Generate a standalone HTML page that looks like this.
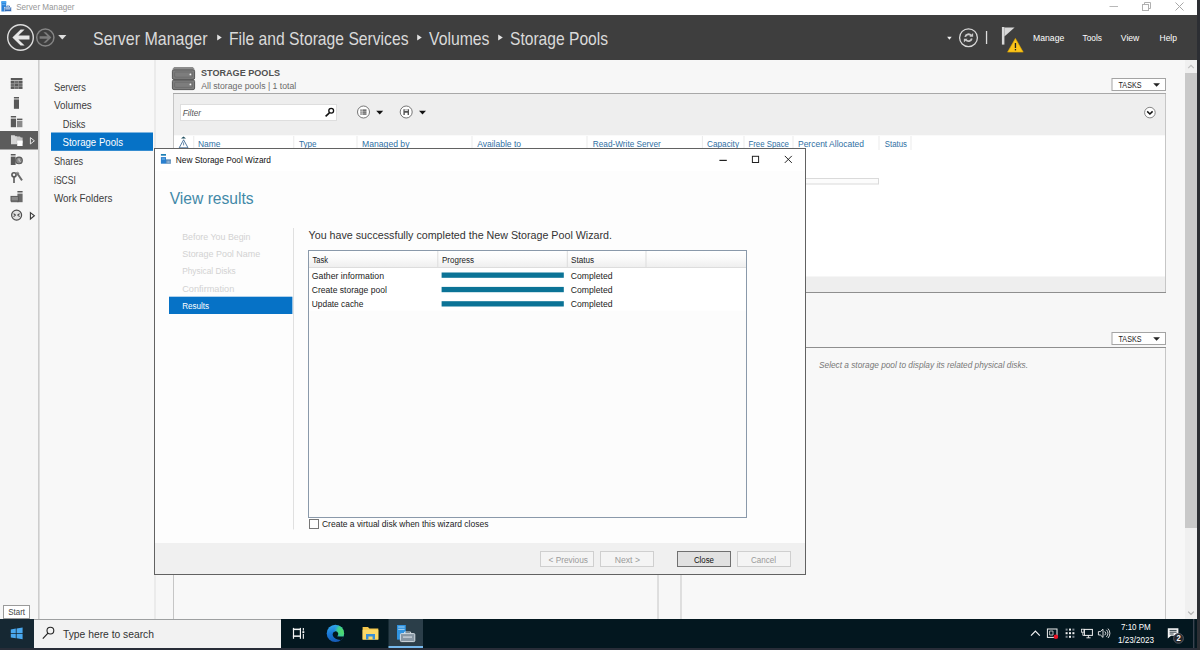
<!DOCTYPE html>
<html><head><meta charset="utf-8"><title>Server Manager</title>
<style>
*{margin:0;padding:0}
html,body{width:1200px;height:650px;overflow:hidden;background:#2c2e33}
svg{display:block;font-family:"Liberation Sans",sans-serif}
text{white-space:pre}
</style></head><body>
<svg width="1200" height="650" viewBox="0 0 1200 650">
<g id="server-manager">
<rect x="0" y="0" width="1200" height="650" fill="#2c2e33" />
<rect x="0" y="0" width="1197" height="15" fill="#ffffff" />
<text x="16.2" y="9.8" font-size="8.3" fill="#969696" textLength="58.2" lengthAdjust="spacingAndGlyphs" >Server Manager</text>
<rect x="0" y="15" width="1197" height="45" fill="#3e3e3e" />
<rect x="0" y="60" width="1197" height="560" fill="#f7f7f7" />
<rect x="0" y="60" width="38" height="560" fill="#f6f6f6" />
<rect x="38" y="60" width="1" height="560" fill="#cdcdcd" />
<rect x="39" y="60" width="1" height="560" fill="#dedede" />
<rect x="0" y="131" width="38" height="18.5" fill="#5c5c5c" />
<rect x="40" y="60" width="115" height="560" fill="#f8f8f8" />
<rect x="154" y="60" width="2" height="560" fill="#ebebeb" />
<rect x="51" y="132.5" width="102" height="18.3" fill="#0672c6" />
<text x="54" y="90.60000000000001" font-size="10.6" fill="#3c3c3c" textLength="31.8" lengthAdjust="spacingAndGlyphs" >Servers</text>
<text x="54" y="109.2" font-size="10.6" fill="#3c3c3c" textLength="37.8" lengthAdjust="spacingAndGlyphs" >Volumes</text>
<text x="62.7" y="127.80000000000001" font-size="10.6" fill="#3c3c3c" textLength="22.8" lengthAdjust="spacingAndGlyphs" >Disks</text>
<text x="62.5" y="146.4" font-size="10.6" fill="#fff" textLength="60.5" lengthAdjust="spacingAndGlyphs" >Storage Pools</text>
<text x="54" y="165.0" font-size="10.6" fill="#3c3c3c" textLength="29.1" lengthAdjust="spacingAndGlyphs" >Shares</text>
<text x="54" y="183.6" font-size="10.6" fill="#3c3c3c" textLength="21.8" lengthAdjust="spacingAndGlyphs" >iSCSI</text>
<text x="54" y="202.20000000000002" font-size="10.6" fill="#3c3c3c" textLength="58.4" lengthAdjust="spacingAndGlyphs" >Work Folders</text>
<text x="93" y="45" font-size="17.8" fill="#dadada" textLength="114.5" lengthAdjust="spacingAndGlyphs" >Server Manager</text>
<text x="229" y="45" font-size="17.8" fill="#dadada" textLength="179.5" lengthAdjust="spacingAndGlyphs" >File and Storage Services</text>
<text x="429" y="45" font-size="17.8" fill="#dadada" textLength="60.5" lengthAdjust="spacingAndGlyphs" >Volumes</text>
<text x="510" y="45" font-size="17.8" fill="#dadada" textLength="98" lengthAdjust="spacingAndGlyphs" >Storage Pools</text>
<path d="M217.2 34.6 l4.6 2.9 l-4.6 2.9z" fill="#e4e4e4"/>
<path d="M417.2 34.6 l4.6 2.9 l-4.6 2.9z" fill="#e4e4e4"/>
<path d="M498.2 34.6 l4.6 2.9 l-4.6 2.9z" fill="#e4e4e4"/>
<text x="1033" y="41.3" font-size="8.6" fill="#ffffff" textLength="31.3" lengthAdjust="spacingAndGlyphs" >Manage</text>
<text x="1082.6" y="41.3" font-size="8.6" fill="#ffffff" textLength="19.4" lengthAdjust="spacingAndGlyphs" >Tools</text>
<text x="1120.8" y="41.3" font-size="8.6" fill="#ffffff" textLength="18.5" lengthAdjust="spacingAndGlyphs" >View</text>
<text x="1159.5" y="41.3" font-size="8.6" fill="#ffffff" textLength="17.5" lengthAdjust="spacingAndGlyphs" >Help</text>
<text x="201" y="76" font-size="9.3" fill="#505050" textLength="79" lengthAdjust="spacingAndGlyphs" font-weight="bold">STORAGE POOLS</text>
<text x="201.2" y="88.5" font-size="8.3" fill="#6a6a6a" textLength="95.1" lengthAdjust="spacingAndGlyphs" >All storage pools | 1 total</text>
<rect x="173.5" y="93.5" width="992" height="199" fill="#ffffff" stroke="#c6c6c6" stroke-width="1" />
<line x1="173" y1="93.5" x2="1166" y2="93.5" stroke="#a8a8a8" stroke-width="1"/>
<line x1="173" y1="292.5" x2="1166" y2="292.5" stroke="#8f8f8f" stroke-width="1"/>
<rect x="174" y="94" width="991" height="41.3" fill="#eeeeee" />
<rect x="174" y="276.5" width="991" height="15.5" fill="#eeeeee" />
<rect x="180.5" y="104.5" width="156" height="16" fill="#ffffff" stroke="#dedede" stroke-width="1" />
<text x="182.8" y="115.8" font-size="8.6" fill="#555" textLength="18.2" lengthAdjust="spacingAndGlyphs" font-style="italic">Filter</text>
<text x="198" y="146.5" font-size="8.5" fill="#2f6fa3" textLength="22.5" lengthAdjust="spacingAndGlyphs" >Name</text>
<text x="299" y="146.5" font-size="8.5" fill="#2f6fa3" textLength="17.5" lengthAdjust="spacingAndGlyphs" >Type</text>
<text x="362" y="146.5" font-size="8.5" fill="#2f6fa3" textLength="47.5" lengthAdjust="spacingAndGlyphs" >Managed by</text>
<text x="477.2" y="146.5" font-size="8.5" fill="#2f6fa3" textLength="43.8" lengthAdjust="spacingAndGlyphs" >Available to</text>
<text x="592.8" y="146.5" font-size="8.5" fill="#2f6fa3" textLength="68.0" lengthAdjust="spacingAndGlyphs" >Read-Write Server</text>
<text x="707" y="146.5" font-size="8.5" fill="#2f6fa3" textLength="32" lengthAdjust="spacingAndGlyphs" >Capacity</text>
<text x="748.4" y="146.5" font-size="8.5" fill="#2f6fa3" textLength="40.6" lengthAdjust="spacingAndGlyphs" >Free Space</text>
<text x="798" y="146.5" font-size="8.5" fill="#2f6fa3" textLength="66" lengthAdjust="spacingAndGlyphs" >Percent Allocated</text>
<text x="884.8" y="146.5" font-size="8.5" fill="#2f6fa3" textLength="22.2" lengthAdjust="spacingAndGlyphs" >Status</text>
<line x1="193.75" y1="136" x2="193.75" y2="150" stroke="#ebebeb" stroke-width="1"/>
<line x1="293.75" y1="136" x2="293.75" y2="150" stroke="#ebebeb" stroke-width="1"/>
<line x1="357" y1="136" x2="357" y2="150" stroke="#ebebeb" stroke-width="1"/>
<line x1="472" y1="136" x2="472" y2="150" stroke="#ebebeb" stroke-width="1"/>
<line x1="587" y1="136" x2="587" y2="150" stroke="#ebebeb" stroke-width="1"/>
<line x1="702.4" y1="136" x2="702.4" y2="150" stroke="#ebebeb" stroke-width="1"/>
<line x1="744" y1="136" x2="744" y2="150" stroke="#ebebeb" stroke-width="1"/>
<line x1="793" y1="136" x2="793" y2="150" stroke="#ebebeb" stroke-width="1"/>
<line x1="879" y1="136" x2="879" y2="150" stroke="#ebebeb" stroke-width="1"/>
<line x1="911" y1="136" x2="911" y2="150" stroke="#ebebeb" stroke-width="1"/>
<rect x="805.5" y="178.5" width="73" height="5.5" fill="#fcfcfc" stroke="#dadada" stroke-width="1" />
<rect x="1112" y="78.5" width="53.5" height="12" fill="#ffffff" stroke="#a4a4a4" stroke-width="1" />
<text x="1118.5" y="87.8" font-size="8.4" fill="#222" textLength="23.0" lengthAdjust="spacingAndGlyphs" >TASKS</text>
<path d="M1153.2 83.2 h6.8 l-3.4 3.6z" fill="#222"/>
<rect x="1112" y="332.5" width="53.5" height="12" fill="#ffffff" stroke="#a4a4a4" stroke-width="1" />
<text x="1118.5" y="341.8" font-size="8.4" fill="#222" textLength="23.0" lengthAdjust="spacingAndGlyphs" >TASKS</text>
<path d="M1153.2 337.2 h6.8 l-3.4 3.6z" fill="#222"/>
<rect x="173.5" y="347.5" width="484.5" height="280" fill="#f8f8f8" stroke="#c6c6c6" stroke-width="1" />
<rect x="681" y="347.5" width="484.5" height="280" fill="#f8f8f8" stroke="#c6c6c6" stroke-width="1" />
<line x1="173" y1="347.5" x2="658.5" y2="347.5" stroke="#8f8f8f" stroke-width="1"/>
<line x1="680.5" y1="347.5" x2="1166" y2="347.5" stroke="#8f8f8f" stroke-width="1"/>
<text x="819" y="367.6" font-size="8.7" fill="#777" textLength="209" lengthAdjust="spacingAndGlyphs" font-style="italic">Select a storage pool to display its related physical disks.</text>
<rect x="1185" y="60" width="12" height="560" fill="#f0f0f0" />
<rect x="1185" y="73" width="12" height="455" fill="#c9c9c9" />
<g id="title-icon"><rect x="1.4" y="1.3" width="4.8" height="10.2" fill="#2a80d8"/><rect x="1.4" y="1.3" width="4.8" height="1.9" fill="#45a4f2"/><rect x="2.2" y="4.3" width="3.2" height="0.8" fill="#7cc0f6"/><rect x="4.3" y="7.2" width="7.1" height="4.2" fill="#3067b0" stroke="#f4f8fc" stroke-width="0.5"/><rect x="5.3" y="8.4" width="5.1" height="1" fill="#e4eefa"/><path d="M6.9 7v-1h2.6v1" fill="none" stroke="#3067b0" stroke-width="0.8"/></g>
<line x1="1109.5" y1="6.5" x2="1118" y2="6.5" stroke="#b8b8b8" stroke-width="1"/>
<rect x="1142.5" y="4.5" width="6" height="6" fill="#fff" stroke="#b0b0b0"/><path d="M1144.5 4.5v-2h6v6h-2" fill="none" stroke="#b0b0b0"/>
<path d="M1175.5 2.5l8 8M1183.5 2.5l-8 8" stroke="#a8a8a8" fill="none"/>
<circle cx="20.5" cy="37.5" r="12.8" fill="none" stroke="#dcdcdc" stroke-width="1.4"/>
<path d="M12.4 37.5 L20.6 29.6 L24.6 29.6 L18.4 35.6 L29.5 35.6 L29.5 39.4 L18.4 39.4 L24.6 45.4 L20.6 45.4Z" fill="#e6e6e6"/>
<circle cx="45.3" cy="37.5" r="8.6" fill="none" stroke="#858585" stroke-width="1.5"/>
<path d="M51.4 37.5 L46 32.2 L43.4 32.2 L47.5 36.3 L39.6 36.3 L39.6 38.7 L47.5 38.7 L43.4 42.8 L46 42.8Z" fill="#7c7c7c"/>
<path d="M58.2 35 h8.2 l-4.1 4.6z" fill="#dedede"/>
<path d="M947.1 36.8 h4.6 l-2.3 2.9z" fill="#f0f0f0"/>
<circle cx="968.5" cy="37.7" r="8.9" fill="none" stroke="#d8d8d8" stroke-width="1.3"/>
<path d="M965.2 36.9 A3.4 3.4 0 0 1 971.2 35.6" fill="none" stroke="#c8c8c8" stroke-width="1.8"/><path d="M969.4 36.7 h3.7 v-3.7z" fill="#c8c8c8"/>
<path d="M971.8 38.5 A3.4 3.4 0 0 1 965.8 39.8" fill="none" stroke="#c8c8c8" stroke-width="1.8"/><path d="M967.6 38.7 h-3.7 v3.7z" fill="#c8c8c8"/>
<rect x="985.9" y="31" width="1.3" height="13" fill="#dcdcdc" />
<path d="M1001.9 27 h2.5 v17.6 h-2.5z" fill="#d8d8d8"/><path d="M1004.4 27.4 L1014.6 27.6 L1004.4 36.4z" fill="#d8d8d8"/>
<path d="M1015.4 38.4 L1023.2 52.1 L1007.6 52.1Z" fill="#fcc419" stroke="#e0a800" stroke-width="0.6" stroke-linejoin="round"/><rect x="1014.8" y="43" width="1.3" height="5" fill="#222"/><rect x="1014.8" y="49" width="1.3" height="1.4" fill="#222"/>
<g id="ico-dashboard" fill="#595959"><rect x="10.8" y="80.6" width="11.6" height="8.4" fill="#a4a4a4"/><rect x="10.8" y="78" width="11.6" height="2.2"/><rect x="10.8" y="81.0" width="3.5" height="2.3" fill="#595959"/><rect x="10.8" y="83.8" width="3.5" height="2.3" fill="#6e6e6e"/><rect x="10.8" y="86.6" width="3.5" height="2.3" fill="#595959"/><rect x="14.850000000000001" y="81.0" width="3.5" height="2.3" fill="#6e6e6e"/><rect x="14.850000000000001" y="83.8" width="3.5" height="2.3" fill="#595959"/><rect x="14.850000000000001" y="86.6" width="3.5" height="2.3" fill="#6e6e6e"/><rect x="18.9" y="81.0" width="3.5" height="2.3" fill="#595959"/><rect x="18.9" y="83.8" width="3.5" height="2.3" fill="#6e6e6e"/><rect x="18.9" y="86.6" width="3.5" height="2.3" fill="#595959"/></g>
<g id="ico-local" fill="#595959"><rect x="13.9" y="97" width="5.1" height="1.5"/><rect x="13.9" y="99.4" width="5.1" height="9.4"/></g>
<g id="ico-all"><rect x="10.8" y="116" width="5.3" height="1.5" fill="#595959"/><rect x="10.8" y="118.6" width="5.3" height="8.6" fill="#595959"/><rect x="17" y="118.6" width="5.4" height="1.6" fill="#595959"/><rect x="17" y="121" width="5.4" height="6.2" fill="#8a8a8a"/></g>
<g id="ico-fss"><path d="M11 135.2 h3.6 l0.8 1 h1.6 v8 h-6z" fill="#d6d6d6"/><path d="M16.6 136.4 h3.4 l0.8 1 h1.8 v5.8 h-6z" fill="#c4c4c4"/><rect x="17.2" y="140.6" width="5.4" height="5.4" fill="#ffffff"/></g>
<path d="M30.4 137.6 L34.4 140.8 L30.4 144 Z" fill="none" stroke="#f0f0f0" stroke-width="0.9"/>
<g id="ico-5"><rect x="10.8" y="154" width="4.8" height="1.5" fill="#595959"/><rect x="10.8" y="156.6" width="4.8" height="8.4" fill="#595959"/><circle cx="19" cy="160.4" r="3.3" fill="#8a8a8a" stroke="#595959" stroke-width="1.1"/><path d="M19 158.4v2.2l1.6 1" stroke="#eee" stroke-width="0.7" fill="none"/></g>
<g id="ico-6" stroke="#595959" fill="none"><circle cx="14" cy="174.8" r="2.1" stroke-width="1.6"/><path d="M14 177v6" stroke-width="1.6"/><path d="M17.2 173.2 L22 180.4" stroke-width="1.9" stroke="#6a6a6a"/><circle cx="17.4" cy="173.6" r="1.3" stroke-width="1" stroke="#777"/></g>
<g id="ico-7"><rect x="17.4" y="191" width="5.2" height="1.5" fill="#595959"/><rect x="17.4" y="193.6" width="5.2" height="8.6" fill="#6a6a6a"/><rect x="11" y="196.4" width="7.4" height="4.6" fill="#8a8a8a" stroke="#595959" stroke-width="1"/><rect x="11" y="201.2" width="7.4" height="1" fill="#595959"/></g>
<g id="ico-8"><circle cx="16.6" cy="215.1" r="5" fill="#e2e2e2" stroke="#4e4e4e" stroke-width="1.2"/><path d="M13.6 213.6l1.8 1.5l-1.8 1.5M19.6 213.6l-1.8 1.5l1.8 1.5" stroke="#444" stroke-width="1.1" fill="none"/></g>
<path d="M30.4 212.6 L34.4 215.8 L30.4 219 Z" fill="none" stroke="#3a3a3a" stroke-width="1.1"/>
<g id="ico-storage"><path d="M174.2 67 h18.6 l2.2 2.6 h-23z" fill="#8c8c8c"/><rect x="172.4" y="69.8" width="22.2" height="9.6" rx="1.5" fill="#7d7d7d" stroke="#555" stroke-width="1"/><rect x="172.4" y="80" width="22.2" height="9.6" rx="1.5" fill="#7d7d7d" stroke="#555" stroke-width="1"/><rect x="174.6" y="72" width="17.8" height="5.2" rx="1" fill="none" stroke="#6a6a6a" stroke-width="0.8"/><rect x="174.6" y="82.2" width="17.8" height="5.2" rx="1" fill="none" stroke="#6a6a6a" stroke-width="0.8"/><circle cx="190.4" cy="74.4" r="0.9" fill="#f4f4f4"/><circle cx="190.4" cy="84.4" r="0.9" fill="#f4f4f4"/></g>
<g id="ico-search"><circle cx="331.2" cy="110.8" r="2.4" fill="none" stroke="#111" stroke-width="1.3"/><path d="M329.4 112.8 L325.6 116.4" stroke="#111" stroke-width="1.6"/></g>
<g id="ico-list"><circle cx="363.5" cy="112" r="6" fill="#fff" stroke="#666" stroke-width="0.9"/><rect x="360.4" y="109.5" width="1.3" height="1.25" fill="#444"/><rect x="362.4" y="109.5" width="4.1" height="1.25" fill="#444"/><rect x="360.4" y="111.45" width="1.3" height="1.25" fill="#444"/><rect x="362.4" y="111.45" width="4.1" height="1.25" fill="#444"/><rect x="360.4" y="113.4" width="1.3" height="1.25" fill="#444"/><rect x="362.4" y="113.4" width="4.1" height="1.25" fill="#444"/></g>
<path d="M376.2 110.8 h7 l-3.5 3.7z" fill="#111"/>
<g id="ico-save"><circle cx="406.2" cy="112" r="6" fill="#fff" stroke="#666" stroke-width="0.9"/><path d="M403.4 109.2 h5.6 v5.8 h-1.4 v-2.2 h-2.8 v2.2 h-1.4z" fill="#555"/><rect x="404.6" y="109.2" width="3.2" height="1.8" fill="#ddd"/></g>
<path d="M419 110.8 h7 l-3.5 3.7z" fill="#111"/>
<g id="ico-expand"><circle cx="1149.9" cy="112.6" r="5.3" fill="#fff" stroke="#777" stroke-width="0.9"/><path d="M1147.2 111.4 l2.7 2.6 l2.7 -2.6" fill="none" stroke="#111" stroke-width="1.5"/></g>
<path d="M181 138.6 h5 l-2.5 -2.2z" fill="#1f4e5f"/>
<path d="M183.6 139.8 L188 147.8 L179.2 147.8Z" fill="none" stroke="#2b5a8a" stroke-width="0.8"/><path d="M183.6 142.4v3" stroke="#2b5a8a" stroke-width="0.7"/>
<path d="M1188.2 68.2 l2.8 -2.8 l2.8 2.8" fill="none" stroke="#c0c0c0" stroke-width="1.2"/>
<path d="M1188.2 611.6 l2.8 2.8 l2.8 -2.8" fill="none" stroke="#b0b0b0" stroke-width="1.2"/>
</g>
<g id="wizard">
<rect x="154.5" y="148.5" width="651" height="426" fill="#fdfdfd" stroke="#626262" stroke-width="1" />
<rect x="155" y="149" width="650" height="22" fill="#ffffff" />
<rect x="155" y="543" width="650" height="31" fill="#f0f0f0" />
<text x="175.8" y="162.8" font-size="8.9" fill="#111" textLength="95.2" lengthAdjust="spacingAndGlyphs" >New Storage Pool Wizard</text>
<text x="169.7" y="204.3" font-size="15.8" fill="#4289a8" textLength="84.0" lengthAdjust="spacingAndGlyphs" >View results</text>
<text x="182.2" y="239.9" font-size="9.2" fill="#d2d2d2" textLength="68.3" lengthAdjust="spacingAndGlyphs" >Before You Begin</text>
<text x="182.2" y="257.1" font-size="9.2" fill="#d2d2d2" textLength="78.0" lengthAdjust="spacingAndGlyphs" >Storage Pool Name</text>
<text x="182.2" y="274.3" font-size="9.2" fill="#d2d2d2" textLength="53.6" lengthAdjust="spacingAndGlyphs" >Physical Disks</text>
<text x="182.2" y="291.6" font-size="9.2" fill="#d2d2d2" textLength="52.1" lengthAdjust="spacingAndGlyphs" >Confirmation</text>
<rect x="169" y="296.7" width="123.4" height="17.3" fill="#0672c6" />
<text x="182.2" y="308.8" font-size="9.2" fill="#ffffff" textLength="26.9" lengthAdjust="spacingAndGlyphs" >Results</text>
<line x1="293.5" y1="228" x2="293.5" y2="529.5" stroke="#e0e0e0" stroke-width="1"/>
<text x="308.6" y="238.8" font-size="10.5" fill="#333" textLength="303.4" lengthAdjust="spacingAndGlyphs" >You have successfully completed the New Storage Pool Wizard.</text>
<rect x="308.5" y="250.5" width="438" height="267" fill="#fcfcfc" stroke="#8a99aa" stroke-width="1" />
<defs><linearGradient id="thg" x1="0" y1="0" x2="0" y2="1"><stop offset="0" stop-color="#ffffff"/><stop offset="0.45" stop-color="#fafafa"/><stop offset="1" stop-color="#eeeeee"/></linearGradient></defs>
<rect x="309" y="251" width="437" height="16.5" fill="url(#thg)" />
<rect x="309" y="268" width="437" height="42.5" fill="#ffffff" />
<line x1="309" y1="267.5" x2="746" y2="267.5" stroke="#dddddd" stroke-width="1"/>
<line x1="437.8" y1="251" x2="437.8" y2="267" stroke="#dddddd" stroke-width="1"/>
<line x1="567.3" y1="251" x2="567.3" y2="267" stroke="#dddddd" stroke-width="1"/>
<line x1="646" y1="251" x2="646" y2="267" stroke="#dddddd" stroke-width="1"/>
<text x="312.5" y="262.6" font-size="8.9" fill="#222" textLength="15.5" lengthAdjust="spacingAndGlyphs" >Task</text>
<text x="442" y="262.6" font-size="8.9" fill="#222" textLength="32" lengthAdjust="spacingAndGlyphs" >Progress</text>
<text x="571" y="262.6" font-size="8.9" fill="#222" textLength="23" lengthAdjust="spacingAndGlyphs" >Status</text>
<text x="311.8" y="278.7" font-size="8.9" fill="#222" textLength="72.2" lengthAdjust="spacingAndGlyphs" >Gather information</text>
<rect x="441.6" y="272.5" width="122.2" height="5.3" fill="#0b7396" />
<text x="570.8" y="278.7" font-size="8.9" fill="#222" textLength="41.7" lengthAdjust="spacingAndGlyphs" >Completed</text>
<text x="311.8" y="293.1" font-size="8.9" fill="#222" textLength="75.1" lengthAdjust="spacingAndGlyphs" >Create storage pool</text>
<rect x="441.6" y="286.9" width="122.2" height="5.3" fill="#0b7396" />
<text x="570.8" y="293.1" font-size="8.9" fill="#222" textLength="41.7" lengthAdjust="spacingAndGlyphs" >Completed</text>
<text x="311.8" y="307.4" font-size="8.9" fill="#222" textLength="51.6" lengthAdjust="spacingAndGlyphs" >Update cache</text>
<rect x="441.6" y="301.2" width="122.2" height="5.3" fill="#0b7396" />
<text x="570.8" y="307.4" font-size="8.9" fill="#222" textLength="41.7" lengthAdjust="spacingAndGlyphs" >Completed</text>
<rect x="309.5" y="519.5" width="9" height="9" fill="#ffffff" stroke="#777" stroke-width="1" />
<text x="322" y="527" font-size="8.7" fill="#222" textLength="166.4" lengthAdjust="spacingAndGlyphs" >Create a virtual disk when this wizard closes</text>
<rect x="540.5" y="551.5" width="53" height="15" fill="#f4f4f4" stroke="#cfcfcf" stroke-width="1" />
<text x="548.5" y="562.5" font-size="8.9" fill="#9a9a9a" textLength="39.5" lengthAdjust="spacingAndGlyphs" >&lt; Previous</text>
<rect x="600.5" y="551.5" width="53" height="15" fill="#f4f4f4" stroke="#cfcfcf" stroke-width="1" />
<text x="614.7" y="562.5" font-size="8.9" fill="#9a9a9a" textLength="25.3" lengthAdjust="spacingAndGlyphs" >Next &gt;</text>
<rect x="677.5" y="551.5" width="53" height="15" fill="#e1e1e1" stroke="#707070" stroke-width="1" />
<text x="693.9" y="562.5" font-size="8.9" fill="#111" textLength="20.1" lengthAdjust="spacingAndGlyphs" >Close</text>
<rect x="737.5" y="551.5" width="53" height="15" fill="#f4f4f4" stroke="#cfcfcf" stroke-width="1" />
<text x="751" y="562.5" font-size="8.9" fill="#9a9a9a" textLength="25" lengthAdjust="spacingAndGlyphs" >Cancel</text>
<g id="dlg-icon"><rect x="160.9" y="154" width="5.1" height="1.7" fill="#1d7fb4"/><rect x="160.9" y="157.1" width="5.1" height="6.6" fill="#2a7fce"/><rect x="161.8" y="158.6" width="3.2" height="0.8" fill="#8fd0f8"/><rect x="166" y="159.4" width="4.9" height="4.3" fill="#4f83b4"/><path d="M167.2 160.6v2.4M168.6 160.6v2.4M169.9 160.6v2.4" stroke="#c8dcf0" stroke-width="0.6"/></g>
<line x1="719.4" y1="160.4" x2="726.8" y2="160.4" stroke="#222" stroke-width="1.2"/>
<rect x="752.4" y="156.3" width="6.2" height="6.2" fill="none" stroke="#222" stroke-width="1" />
<path d="M784.8 155.9 l7 7 M791.8 155.9 l-7 7" stroke="#222" stroke-width="1" fill="none"/>
</g>
<g id="taskbar">
<rect x="0" y="619" width="1197" height="31" fill="#03171f" />
<rect x="0" y="648" width="1197" height="2" fill="#282d38" />
<rect x="0" y="619" width="34" height="29" fill="#162833" />
<rect x="34" y="619.5" width="247" height="28.5" fill="#f2f2f2" />
<rect x="34" y="619" width="247" height="0.8" fill="#a8a8a8" />
<text x="63" y="637.5" font-size="11" fill="#333" textLength="91" lengthAdjust="spacingAndGlyphs" >Type here to search</text>
<rect x="388.5" y="619" width="34.5" height="29" fill="#2b3e49" />
<rect x="388.5" y="646" width="34.5" height="2" fill="#76b9ed" />
<g id="ico-win" fill="#4aa8ee"><path d="M10.8 629.4 l5 -0.8 v4.4 h-5z"/><path d="M16.6 628.5 l6 -1 v5.5 h-6z"/><path d="M10.8 633.8 h5 v4.4 l-5 -0.8z"/><path d="M16.6 633.8 h6 v5.5 l-6 -1z"/></g>
<g id="ico-tsearch"><circle cx="50.4" cy="630.6" r="3.4" fill="none" stroke="#222" stroke-width="1.1"/><path d="M48 633.2 L42.8 638.6" stroke="#222" stroke-width="1.2"/></g>
<g id="ico-taskview" fill="#f4f4f4"><rect x="292.9" y="627.9" width="1.2" height="10.9"/><rect x="299.8" y="627.9" width="1.2" height="10.9"/><rect x="292.9" y="628.6" width="8.1" height="1.5"/><rect x="292.9" y="635.4" width="8.1" height="1.5"/><rect x="302.8" y="628" width="1.1" height="2.6"/><rect x="302.4" y="631.2" width="1.9" height="1.9"/><rect x="302.8" y="634" width="1.1" height="4.8"/></g>
<g id="ico-edge"><defs><linearGradient id="eb" x1="0" y1="0" x2="0.3" y2="1"><stop offset="0" stop-color="#39b4f0"/><stop offset="0.5" stop-color="#1a7ad8"/><stop offset="1" stop-color="#155cb6"/></linearGradient><radialGradient id="eg" cx="0.75" cy="0.5" r="0.75"><stop offset="0" stop-color="#55df62"/><stop offset="0.6" stop-color="#3fcf8e"/><stop offset="1" stop-color="#2fb0dd" stop-opacity="0"/></radialGradient><clipPath id="ec"><circle cx="335.4" cy="633.4" r="8.7"/></clipPath></defs><circle cx="335.4" cy="633.4" r="8.7" fill="url(#eb)"/><g clip-path="url(#ec)"><ellipse cx="340.2" cy="631" rx="6.6" ry="6.4" fill="url(#eg)"/><path d="M332.6 634.2 a2.9 2.9 0 0 1 5.6 -1 c0.2 1.4 -0.6 2.4 -1 3.2 h8 v2.6 c-2 1 -5 1.4 -7.4 0.6 c-3 -1 -5.2 -3 -5.2 -5.4z" fill="#03171f"/></g></g>
<g id="ico-explorer"><path d="M362.6 627 h5.4 l1.4 1.6 h8.9 v11 h-15.7z" fill="#f5c84c"/><rect x="362.6" y="629.8" width="15.7" height="9.8" fill="#fbd968"/><path d="M366 639.6 v-5.6 h9 v5.6 h-2.4 v-3 h-4.2 v3z" fill="#3a8fd6"/></g>
<g id="ico-sm"><rect x="397" y="625" width="8.8" height="14.6" fill="#2f93e0"/><path d="M398.2 627 h6.4 M398.2 629.4 h6.4" stroke="#bfe0f7" stroke-width="0.8"/><rect x="400.4" y="633.6" width="14.4" height="8" rx="1" fill="#8796a3" stroke="#dfe6ec" stroke-width="0.9"/><path d="M404.6 633.4 v-1.4 h6 v1.4" fill="none" stroke="#dfe6ec" stroke-width="0.9"/><rect x="403" y="636.4" width="9" height="1.4" fill="#c9d2da"/></g>
<path d="M1031 635.6 l4.4 -4.4 l4.4 4.4" fill="none" stroke="#f4f4f4" stroke-width="1.2"/>
<g id="tray1"><rect x="1047.4" y="629" width="9.6" height="8.4" fill="none" stroke="#f0f0f0" stroke-width="1"/><path d="M1049.6 631 h3.4 v4 h-3.4z" fill="none" stroke="#d8d8d8" stroke-width="0.8"/><circle cx="1055.9" cy="636.8" r="2.3" fill="#e81123"/></g>
<g id="tray2"><rect x="1065.6" y="628.6" width="2" height="2" fill="#7d8790"/><rect x="1065.6" y="632.2" width="2" height="2" fill="#f4f4f4"/><rect x="1065.6" y="635.8000000000001" width="2" height="2" fill="#7d8790"/><rect x="1069.0" y="628.6" width="2" height="2" fill="#f4f4f4"/><rect x="1069.0" y="632.2" width="2" height="2" fill="#f4f4f4"/><rect x="1069.0" y="635.8000000000001" width="2" height="2" fill="#f4f4f4"/><rect x="1072.3999999999999" y="628.6" width="2" height="2" fill="#7d8790"/><rect x="1072.3999999999999" y="632.2" width="2" height="2" fill="#f4f4f4"/><rect x="1072.3999999999999" y="635.8000000000001" width="2" height="2" fill="#7d8790"/></g>
<g id="tray3" fill="none" stroke="#f0f0f0"><rect x="1084.4" y="629.4" width="8" height="6" stroke-width="1"/><path d="M1086.4 637.8 h4.2 M1088.4 635.4 v2.4" stroke-width="0.9"/><rect x="1081.4" y="629.2" width="2.6" height="3" stroke-width="0.8"/><path d="M1082.8 632.4 v3 h1.4" stroke-width="0.8"/></g>
<g id="tray4" fill="none" stroke="#f0f0f0" stroke-width="0.9"><path d="M1098.4 631.6 h2 l2.6 -2.4 v8.2 l-2.6 -2.4 h-2z"/><path d="M1104.8 631.4 a2.6 2.6 0 0 1 0 3.8"/><path d="M1106.4 629.8 a4.8 4.8 0 0 1 0 7"/><path d="M1108 628.6 a6.8 6.8 0 0 1 0 9.4"/></g>
<g id="tray-notif"><path d="M1167.8 628.2 h10.6 v7.6 h-7.4 l-3.2 2.6z" fill="#f4f4f4"/><path d="M1169.6 630.4 h7 M1169.6 632.2 h7 M1169.6 634 h4" stroke="#03171f" stroke-width="0.8"/><circle cx="1178.5" cy="638.4" r="4.9" fill="#26282c" stroke="#5a5f66" stroke-width="0.9"/></g>
<text x="1176.5" y="641.3" font-size="8.3" fill="#ffffff" textLength="4.3" lengthAdjust="spacingAndGlyphs" font-weight="bold">2</text>
<rect x="1193" y="619" width="1.4" height="29" fill="#39434f" />
<rect x="3.5" y="605.5" width="26" height="13" fill="#ffffff" stroke="#9a9a9a" stroke-width="1" />
<text x="8.3" y="614.7" font-size="9" fill="#444" textLength="16.7" lengthAdjust="spacingAndGlyphs" >Start</text>
<text x="1121" y="629.7" font-size="9" fill="#ffffff" textLength="29.8" lengthAdjust="spacingAndGlyphs" >7:10 PM</text>
<text x="1118" y="642.5" font-size="9" fill="#ffffff" textLength="36" lengthAdjust="spacingAndGlyphs" >1/23/2023</text>
</g>
</svg>
</body></html>
